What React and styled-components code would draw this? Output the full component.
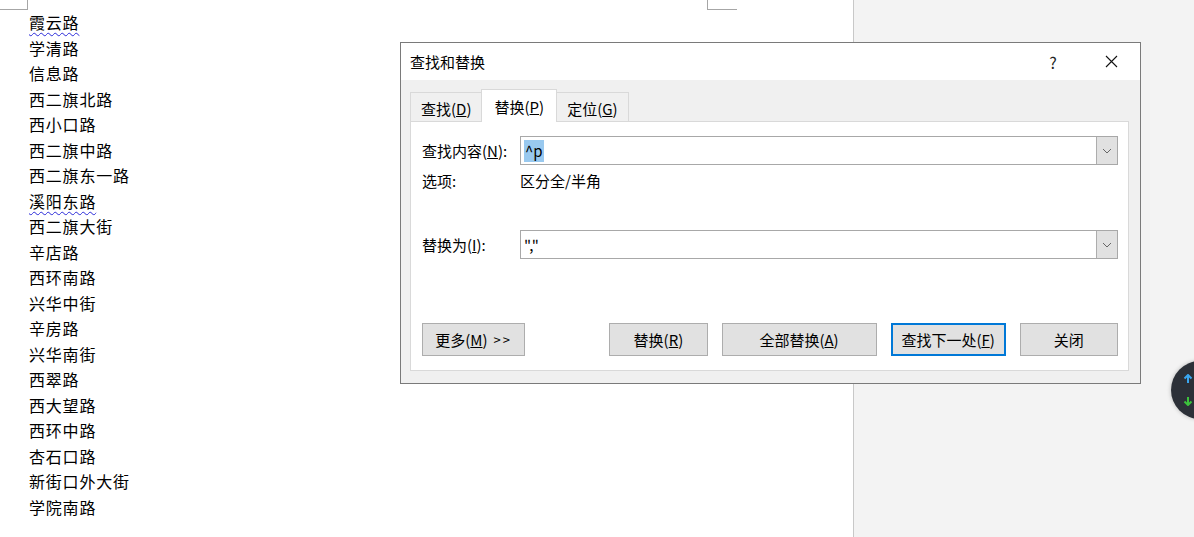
import React from "react";
import styled, { createGlobalStyle } from "styled-components";

const roads = [
  { name: "霞云路", wavy: true },
  { name: "学清路" },
  { name: "信息路" },
  { name: "西二旗北路" },
  { name: "西小口路" },
  { name: "西二旗中路" },
  { name: "西二旗东一路" },
  { name: "溪阳东路", wavy: true },
  { name: "西二旗大街" },
  { name: "辛店路" },
  { name: "西环南路" },
  { name: "兴华中街" },
  { name: "辛房路" },
  { name: "兴华南街" },
  { name: "西翠路" },
  { name: "西大望路" },
  { name: "西环中路" },
  { name: "杏石口路" },
  { name: "新街口外大街" },
  { name: "学院南路" },
];

const Global = createGlobalStyle`
  html, body {
    margin: 0;
    padding: 0;
    height: 100%;
    overflow: hidden;
  }
  body {
    font-family: "Noto Sans CJK SC", "Liberation Sans", sans-serif;
    color: #000;
  }
`;

const Screen = styled.div`
  position: relative;
  display: grid;
  grid-template-columns: 854px 1fr;
  height: 537px;
  background: #f3f3f3;
`;

const Page = styled.div`
  background: #fff;
  border-right: 1px solid #c8c8c8;
`;

const CornerRow = styled.div`
  display: flex;
  justify-content: space-between;
  width: 737px;
  height: 10px;
`;

const Corner = styled.div`
  width: ${(p) => p.$w}px;
  height: 10px;
  border-bottom: 1px solid #a6a6a6;
  ${(p) => (p.$side === "left" ? "border-right" : "border-left")}: 1px solid #a6a6a6;
  box-sizing: border-box;
`;

const List = styled.div`
  padding-left: 29px;
  font-size: 16px;
  line-height: 25.5px;
  letter-spacing: 0.8px;
`;

const Line = styled.div`
  text-decoration: ${(p) => (p.$wavy ? "underline wavy #2a2ad8" : "none")};
  text-decoration-thickness: 1px;
  text-underline-offset: 3px;
`;

const Dialog = styled.div`
  position: absolute;
  left: 400px;
  top: 42px;
  width: 741px;
  height: 342px;
  box-sizing: border-box;
  border: 1px solid #7a7a7a;
  background: #f0f0f0;
  display: flex;
  flex-direction: column;
  font-size: 15px;
`;

const TitleBar = styled.div`
  height: 37px;
  background: #fff;
  display: flex;
  align-items: center;
  padding-left: 9px;
  font-size: 15px;
`;

const Title = styled.div`
  flex: 1;
`;

const TitleButton = styled.div`
  width: 58px;
  display: flex;
  justify-content: center;
  align-items: center;
  font-size: 16px;
  color: #222;
`;

const Body = styled.div`
  flex: 1;
  display: flex;
  flex-direction: column;
  padding: 10px 11px 12px 9px;
`;

const Tabs = styled.div`
  display: flex;
  align-items: flex-end;
  height: 32px;
  margin-bottom: -1px;
  position: relative;
  z-index: 1;
`;

const Tab = styled.div`
  height: ${(p) => (p.$active ? 33 : 30)}px;
  box-sizing: border-box;
  padding: 0 ${(p) => (p.$active ? 12 : 10)}px;
  display: flex;
  align-items: center;
  background: ${(p) => (p.$active ? "#fff" : "#f0f0f0")};
  border: 1px solid #d9d9d9;
  border-bottom: ${(p) => (p.$active ? "none" : "1px solid #d9d9d9")};
  margin-left: ${(p) => (p.$first ? 0 : -1)}px;
  padding-top: ${(p) => (p.$active ? 0 : 2)}px;
`;

const Panel = styled.div`
  flex: 1;
  background: #fff;
  border: 1px solid #d9d9d9;
  padding: 14px 10px 14px 11px;
  display: flex;
  flex-direction: column;
`;

const FieldRow = styled.div`
  display: flex;
  align-items: center;
  margin-top: ${(p) => p.$mt || 0}px;
`;

const Label = styled.div`
  width: 98px;
  flex-shrink: 0;
`;

const Combo = styled.div`
  flex: 1;
  height: 29px;
  box-sizing: border-box;
  border: 1px solid #a8a8a8;
  display: flex;
  align-items: stretch;
`;

const ComboText = styled.div`
  flex: 1;
  display: flex;
  align-items: center;
  padding-left: 3px;
  font-size: 15px;
`;

const Selected = styled.span`
  background: #99c9ef;
  padding: 0 1px;
  line-height: 22px;
`;

const ComboArrow = styled.div`
  width: 20px;
  background: #e1e1e1;
  border-left: 1px solid #adadad;
  display: flex;
  align-items: center;
  justify-content: center;
`;

const Spacer = styled.div`
  flex: 1;
`;

const ButtonRow = styled.div`
  display: flex;
  gap: 14px;
`;

const Button = styled.div`
  width: ${(p) => p.$w}px;
  height: 33px;
  box-sizing: border-box;
  background: #e1e1e1;
  border: ${(p) => (p.$default ? "2px solid #0078d7" : "1px solid #adadad")};
  display: flex;
  align-items: center;
  justify-content: center;
  margin-right: ${(p) => p.$mr || 0}px;
`;

const Arrows = styled.span`
  font-size: 13px;
  margin-left: 6px;
  letter-spacing: 2px;
`;

const Float = styled.div`
  position: absolute;
  left: 1171px;
  top: 361px;
  width: 58px;
  height: 58px;
  border-radius: 50%;
  background: #2c3038;
  box-shadow: 0 0 4px rgba(0, 0, 0, 0.25);
  display: flex;
  flex-direction: column;
  justify-content: center;
  gap: 12px;
  padding-left: 12px;
  box-sizing: border-box;
`;

const Chevron = () => (
  <svg width="10" height="6" viewBox="0 0 10 6">
    <path d="M1 1l4 4 4-4" fill="none" stroke="#666" strokeWidth="1" />
  </svg>
);

const Arrow = ({ color, down }) => (
  <svg width="10" height="10" viewBox="0 0 10 10" style={{ transform: down ? "rotate(180deg)" : "none" }}>
    <path d="M5 1v8M1.5 4.5L5 1l3.5 3.5" fill="none" stroke={color} strokeWidth="2" />
  </svg>
);

export default function App() {
  return (
    <>
      <Global />
      <Screen>
        <Page>
          <CornerRow>
            <Corner $w={28} $side="left" />
            <Corner $w={30} $side="right" />
          </CornerRow>
          <List>
            {roads.map((r) => (
              <Line key={r.name} $wavy={r.wavy}>
                {r.name}
              </Line>
            ))}
          </List>
        </Page>
        <div />

        <Dialog>
          <TitleBar>
            <Title>查找和替换</Title>
            <TitleButton>?</TitleButton>
            <TitleButton>
              <svg width="13" height="13" viewBox="0 0 13 13">
                <path d="M1 1l11 11M12 1L1 12" stroke="#111" strokeWidth="1.1" />
              </svg>
            </TitleButton>
          </TitleBar>
          <Body>
            <Tabs>
              <Tab $first>
                查找(<u>D</u>)
              </Tab>
              <Tab $active>
                替换(<u>P</u>)
              </Tab>
              <Tab>
                定位(<u>G</u>)
              </Tab>
            </Tabs>
            <Panel>
              <FieldRow>
                <Label>
                  查找内容(<u>N</u>):
                </Label>
                <Combo>
                  <ComboText>
                    <Selected>^p</Selected>
                  </ComboText>
                  <ComboArrow>
                    <Chevron />
                  </ComboArrow>
                </Combo>
              </FieldRow>
              <FieldRow $mt={5}>
                <Label>选项:</Label>
                <div>区分全/半角</div>
              </FieldRow>
              <FieldRow $mt={39}>
                <Label>
                  替换为(<u>I</u>):
                </Label>
                <Combo>
                  <ComboText>","</ComboText>
                  <ComboArrow>
                    <Chevron />
                  </ComboArrow>
                </Combo>
              </FieldRow>
              <Spacer />
              <ButtonRow>
                <Button $w={104} $mr={70}>
                  更多(<u>M</u>)<Arrows>&gt;&gt;</Arrows>
                </Button>
                <Button $w={99}>
                  替换(<u>R</u>)
                </Button>
                <Button $w={156}>
                  全部替换(<u>A</u>)
                </Button>
                <Button $w={116} $default>
                  查找下一处(<u>F</u>)
                </Button>
                <Button $w={99}>关闭</Button>
              </ButtonRow>
            </Panel>
          </Body>
        </Dialog>

        <Float>
          <Arrow color="#3aa6f0" />
          <Arrow color="#3cc23c" down />
        </Float>
      </Screen>
    </>
  );
}
